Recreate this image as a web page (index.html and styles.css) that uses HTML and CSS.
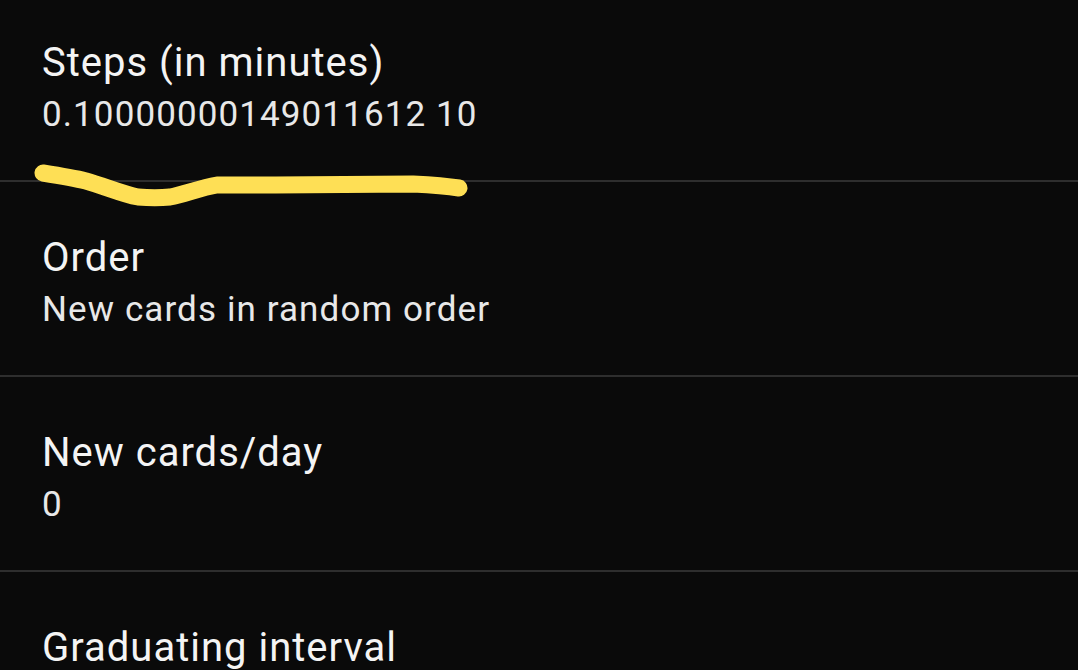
FILE: index.html
```html
<!DOCTYPE html>
<html lang="en">
<head>
    <meta charset="UTF-8">
    <meta name="viewport" content="width=device-width, initial-scale=1.0">
    <title>Deck options</title>
    <link rel="stylesheet" href="styles.css">
</head>
<body>
<div class="pref-list">
    <div class="pref-item">
        <div class="pref-title">Steps (in minutes)</div>
        <div class="pref-summary">0.10000000149011612 10</div>
    </div>
    <div class="pref-item">
        <div class="pref-title">Order</div>
        <div class="pref-summary">New cards in random order</div>
    </div>
    <div class="pref-item">
        <div class="pref-title">New cards/day</div>
        <div class="pref-summary">0</div>
    </div>
    <div class="pref-item">
        <div class="pref-title">Graduating interval</div>
        <div class="pref-summary">1</div>
    </div>
</div>
<!-- highlighter mark drawn over the screenshot -->
<svg class="scribble" width="1078" height="670" viewBox="0 0 1078 670">
    <path d="M43 173 C62 176 74 178 86 181 C104 186 122 194 138 197 C150 198 160 198 170 197 C185 194 200 188 217 185 C235 185 255 185 275 185 L413 184 C432 185 446 186 459 188"
          fill="none" stroke="#fedf55" stroke-width="17" stroke-linecap="round" stroke-linejoin="round"/>
</svg>
</body>
</html>
```

FILE: styles.css
```css
html, body {
    margin: 0;
    padding: 0;
    height: 100%;
    overflow: hidden;
    background-color: #0a0a0a;
}
body {
    font-family: Roboto, "Noto Sans", sans-serif;
    color: #f2f2f2;
}
.pref-list {
    margin-top: -13px;
}
.pref-item {
    padding: 50px 42px 38px;
    border-bottom: 2px solid #2e2e2e;
}
.pref-title {
    font-size: 40px;
    line-height: 51px;
    letter-spacing: 1px;
    color: #f4f4f4;
}
.pref-summary {
    font-size: 35px;
    line-height: 54px;
    letter-spacing: 1.1px;
    color: #e8e8e8;
}
.scribble {
    position: absolute;
    top: 0;
    left: 0;
    pointer-events: none;
}
```
